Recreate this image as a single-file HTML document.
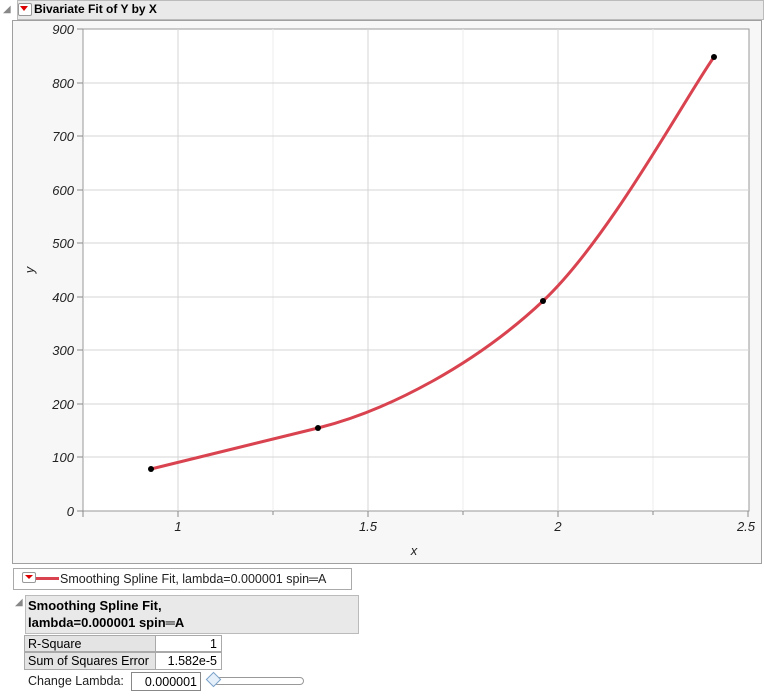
<!DOCTYPE html>
<html><head><style>
body{margin:0;width:764px;height:697px;background:#fff;font-family:"Liberation Sans",sans-serif;position:relative;overflow:hidden}
.abs{position:absolute;white-space:nowrap}
</style></head><body>
<!-- header -->
<div class="abs" style="left:3px;top:4px;font-size:10px;color:#888">&#9698;</div>
<div class="abs" style="left:17px;top:0;width:745px;height:18px;background:#e9e9e9;border:1px solid #bbb"></div>
<div class="abs" style="left:18px;top:3px;width:12px;height:11px;border:1px solid #999;background:#fff;border-radius:2px"></div>
<div class="abs" style="left:20px;top:6px;width:0;height:0;border-left:4px solid transparent;border-right:4px solid transparent;border-top:5px solid #d00"></div>
<div class="abs" style="left:34px;top:2px;font-size:12px;font-weight:bold;color:#000">Bivariate Fit of Y by X</div>
<!-- outer frame -->
<div class="abs" style="left:12px;top:20px;width:748px;height:542px;background:#f7f7f7;border:1px solid #a0a0a0"></div>
<svg class="abs" style="left:0;top:0" width="764" height="565">
<rect x="83" y="29" width="666" height="482" fill="#fff" stroke="#999"/>
<g stroke="#ececec"><line x1="273" y1="29" x2="273" y2="511"/><line x1="463" y1="29" x2="463" y2="511"/><line x1="653" y1="29" x2="653" y2="511"/></g>
<g stroke="#d4d4d4">
<line x1="178" y1="29" x2="178" y2="511"/><line x1="368" y1="29" x2="368" y2="511"/><line x1="558" y1="29" x2="558" y2="511"/>
<line x1="83" y1="457" x2="749" y2="457"/><line x1="83" y1="404" x2="749" y2="404"/><line x1="83" y1="350" x2="749" y2="350"/><line x1="83" y1="297" x2="749" y2="297"/><line x1="83" y1="243" x2="749" y2="243"/><line x1="83" y1="190" x2="749" y2="190"/><line x1="83" y1="136" x2="749" y2="136"/><line x1="83" y1="83" x2="749" y2="83"/>
</g>
<g stroke="#888">
<line x1="77" y1="511" x2="83" y2="511"/><line x1="77" y1="457" x2="83" y2="457"/><line x1="77" y1="404" x2="83" y2="404"/><line x1="77" y1="350" x2="83" y2="350"/><line x1="77" y1="297" x2="83" y2="297"/><line x1="77" y1="243" x2="83" y2="243"/><line x1="77" y1="190" x2="83" y2="190"/><line x1="77" y1="136" x2="83" y2="136"/><line x1="77" y1="83" x2="83" y2="83"/><line x1="77" y1="29" x2="83" y2="29"/>
<line x1="83" y1="511" x2="83" y2="517"/><line x1="178" y1="511" x2="178" y2="517"/><line x1="273" y1="511" x2="273" y2="515"/><line x1="368" y1="511" x2="368" y2="517"/><line x1="463" y1="511" x2="463" y2="515"/><line x1="558" y1="511" x2="558" y2="517"/><line x1="653" y1="511" x2="653" y2="515"/><line x1="748" y1="511" x2="748" y2="517"/>
</g>
<g font-family="Liberation Sans" font-style="italic" font-size="13" fill="#222" text-anchor="end">
<text x="74" y="516">0</text><text x="74" y="462">100</text><text x="74" y="409">200</text><text x="74" y="355">300</text><text x="74" y="302">400</text><text x="74" y="248">500</text><text x="74" y="195">600</text><text x="74" y="141">700</text><text x="74" y="88">800</text><text x="74" y="34">900</text>
</g>
<g font-family="Liberation Sans" font-style="italic" font-size="13" fill="#222" text-anchor="middle">
<text x="178" y="531">1</text><text x="368" y="531">1.5</text><text x="558" y="531">2</text><text x="746" y="531">2.5</text>
<text x="414" y="555">x</text>
</g>
<text x="34" y="270" font-family="Liberation Sans" font-style="italic" font-size="13" fill="#222" transform="rotate(-90 34 270)" text-anchor="middle">y</text>
<path d="M151,469 C207,455 262,442 318,428 C390,410 477,363 543,301 C609,239 685,98 714,57" fill="none" stroke="#d9434f" stroke-width="3"/>
<g fill="#000"><circle cx="151" cy="469" r="3"/><circle cx="318" cy="428" r="3"/><circle cx="543" cy="301" r="3"/><circle cx="714" cy="57" r="3"/></g>
</svg>
<!-- legend -->
<div class="abs" style="left:13px;top:568px;width:337px;height:20px;border:1px solid #aaa;background:#fff"></div>
<div class="abs" style="left:22px;top:572px;width:12px;height:9px;border:1px solid #999;border-radius:2px;background:#fff"></div>
<div class="abs" style="left:25px;top:575px;width:0;height:0;border-left:4px solid transparent;border-right:4px solid transparent;border-top:4px solid #d00"></div>
<div class="abs" style="left:36px;top:577px;width:23px;height:3px;background:#d9434f"></div>
<div class="abs" style="left:60px;top:572px;font-size:12.5px;color:#222">Smoothing Spline Fit, lambda=0.000001 spin═A</div>
<!-- report -->
<div class="abs" style="left:15px;top:597px;font-size:10px;color:#888">&#9698;</div>
<div class="abs" style="left:25px;top:595px;width:332px;height:37px;background:#e9e9e9;border:1px solid #bbb"></div>
<div class="abs" style="left:28px;top:597px;font-size:13px;font-weight:bold;line-height:17px;color:#000">Smoothing Spline Fit,<br>lambda=0.000001 spin═A</div>
<div class="abs" style="left:24px;top:635px;width:132px;height:17px;border:1px solid #aaa;background:#e4e4e4;font-size:12.5px;line-height:17px;padding-left:3px;box-sizing:border-box">R-Square</div>
<div class="abs" style="left:155px;top:635px;width:67px;height:17px;border:1px solid #aaa;background:#fff;font-size:12.5px;line-height:17px;padding-right:4px;text-align:right;box-sizing:border-box">1</div>
<div class="abs" style="left:24px;top:652px;width:132px;height:18px;border:1px solid #aaa;background:#e4e4e4;font-size:12.5px;line-height:17px;padding-left:3px;box-sizing:border-box">Sum of Squares Error</div>
<div class="abs" style="left:155px;top:652px;width:67px;height:18px;border:1px solid #aaa;background:#fff;font-size:12.5px;line-height:17px;padding-right:4px;text-align:right;box-sizing:border-box">1.582e-5</div>
<div class="abs" style="left:28px;top:674px;font-size:12.5px;color:#222">Change Lambda:</div>
<div class="abs" style="left:131px;top:672px;width:70px;height:19px;border:1px solid #888;background:#fff;font-size:12.5px;text-align:right;line-height:18px;padding-right:3px;box-sizing:border-box">0.000001</div>
<div class="abs" style="left:210px;top:677px;width:92px;height:6px;border:1px solid #999;border-radius:4px;background:#fff"></div>
<div class="abs" style="left:208px;top:674px;width:9px;height:9px;border:1px solid #7aa0c8;background:#e6f0fa;transform:rotate(45deg)"></div>
</body></html>
